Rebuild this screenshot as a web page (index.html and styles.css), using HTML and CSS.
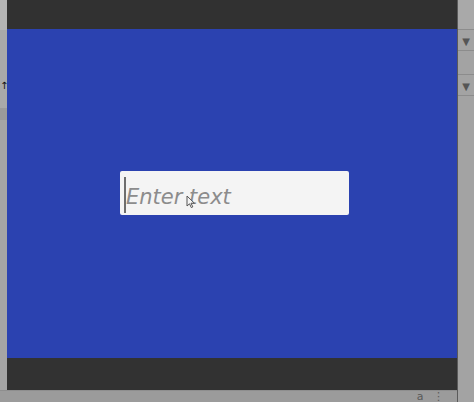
FILE: index.html
```html
<!DOCTYPE html>
<html>
<head>
<meta charset="utf-8">
<link rel="stylesheet" href="styles.css">
</head>
<body>
<div class="screen">
  <div class="left-strip">
    <div class="ls-top"></div>
    <div class="ls-mid"><span class="ls-glyph">↑</span></div>
    <div class="ls-band"></div>
    <div class="ls-rest"></div>
  </div>
  <div class="main">
    <div class="bar top-bar"></div>
    <div class="stage">
      <div class="field">
        <span class="caret"></span>
        <span class="placeholder">Enter text</span>
        <svg class="cursor" width="10" height="14" viewBox="0 0 10 14"><path d="M1 1 L1 11 L3.5 8.8 L5.3 12.6 L6.8 11.9 L5 8.2 L8.4 8.2 Z" fill="#f4f4f4" stroke="#555" stroke-width="1"/></svg>
      </div>
    </div>
    <div class="bar bottom-bar"></div>
  </div>
  <div class="right-strip">
    <div class="rs-top"></div>
    <div class="rs-cell"><span class="arrow">▼</span></div>
    <div class="rs-gap"></div>
    <div class="rs-cell"><span class="arrow">▼</span></div>
    <div class="rs-rest"></div>
  </div>
  <div class="status">
    <span class="status-text">a ⋮</span>
  </div>
</div>
</body>
</html>
```
FILE: styles.css
```css
html, body {
  margin: 0;
  padding: 0;
  background: #9c9c9c;
}
.screen {
  width: 474px;
  height: 402px;
  display: grid;
  grid-template-columns: 7px 450px 1px 16px;
  grid-template-rows: 390px 12px;
  background: #a2a2a2;
  font-family: "DejaVu Sans", sans-serif;
  overflow: hidden;
}
.left-strip {
  grid-column: 1;
  grid-row: 1;
  display: flex;
  flex-direction: column;
  background: #a6a6a6;
}
.ls-top { height: 30px; background: #b4b4b4; }
.ls-mid { height: 78px; background: #a9a9a9; position: relative; }
.ls-glyph {
  position: absolute;
  left: 0;
  top: 50px;
  font-size: 10px;
  line-height: 12px;
  color: #111;
}
.ls-band { height: 12px; background: #9a9a9a; }
.ls-rest { flex: 1; background: #a5a5a5; }
.main {
  grid-column: 2;
  grid-row: 1;
  display: flex;
  flex-direction: column;
}
.bar { background: #323232; }
.top-bar { height: 29px; background: #313131; }
.bottom-bar { height: 32px; }
.stage {
  height: 329px;
  background: #2b42b0;
  display: flex;
  align-items: flex-start;
  padding: 142px 0 0 113px;
  box-sizing: border-box;
}
.field {
  width: 229px;
  height: 44px;
  background: #f4f4f4;
  border-radius: 2px;
  display: flex;
  align-items: center;
  position: relative;
  box-sizing: border-box;
  padding-left: 4px;
}
.caret {
  width: 2px;
  height: 36px;
  background: #6e6e6e;
  margin-top: 3px;
}
.placeholder {
  font-style: italic;
  font-size: 21px;
  color: #8c8c8c;
  margin-left: 0;
  margin-top: 7px;
}
.cursor {
  position: absolute;
  left: 66px;
  top: 24px;
}
.right-strip {
  grid-column: 3 / 5;
  grid-row: 1 / 3;
  display: flex;
  flex-direction: column;
  border-left: 1px solid #5a5a5a;
  background: #a3a3a3;
}
.rs-top { height: 29px; border-bottom: 1px solid #8c8c8c; background: #a9a9a9; }
.rs-cell {
  height: 18px;
  display: flex;
  justify-content: center;
  align-items: center;
  border-bottom: 1px solid #8c8c8c;
  padding-top: 2px;
}
.rs-gap { height: 23px; border-bottom: 1px solid #8c8c8c; }
.arrow {
  font-size: 10px;
  color: #555;
  line-height: 11px;
}
.rs-rest { flex: 1; }
.status {
  grid-column: 1 / 3;
  grid-row: 2;
  background: #9b9b9b;
  border-top: 1px solid #8e8e8e;
  display: flex;
  justify-content: flex-end;
  align-items: center;
  padding-right: 10px;
  box-sizing: border-box;
  overflow: hidden;
}
.status-text {
  font-size: 11px;
  line-height: 11px;
  color: #5a5a5a;
  letter-spacing: 3px;
}
```
